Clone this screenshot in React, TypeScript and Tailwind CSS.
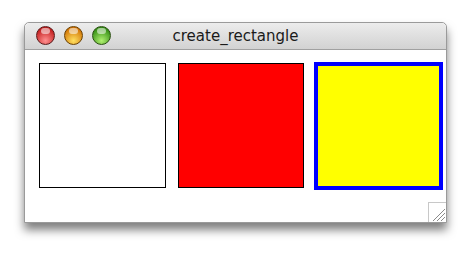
import React from 'react';

// 信号ボタン (閉じる・最小化・拡大)
const Light: React.FC<{ from: string; to: string; edge: string }> = ({ from, to, edge }) => (
  <div
    className="w-[19px] h-[19px] rounded-full border relative"
    style={{ background: `radial-gradient(circle at 50% 80%, ${to} 0%, ${from} 80%)`, borderColor: edge }}
  >
    <div className="absolute left-[4px] top-[1px] w-[9px] h-[6px] rounded-full bg-white/55" />
  </div>
);

const App: React.FC = () => {
  return (
    <div className="w-[474px] h-[255px] bg-white pt-[22px] pl-[24px]">
      <div className="w-[423px] h-[201px] flex flex-col bg-white border border-[#9a9a9a] rounded-t-[5px] shadow-[0_7px_10px_rgba(0,0,0,0.5)]">
        {/* タイトルバー */}
        <div className="h-[27px] flex items-center relative rounded-t-[5px] bg-gradient-to-b from-[#ececec] to-[#d2d2d2] border-b border-[#a0a0a0]">
          <div className="flex items-center gap-[9px] pl-[11px] -mt-[1px]">
            <Light from="#c01818" to="#ff9090" edge="#5a1a1a" />
            <Light from="#d07000" to="#ffe060" edge="#6a4000" />
            <Light from="#2f8a10" to="#b0f070" edge="#2a5010" />
          </div>
          <div
            className="absolute inset-0 flex items-center justify-center text-[15px] text-[#1a1a1a] pt-[1px]"
            style={{ fontFamily: '"DejaVu Sans", "Liberation Sans", sans-serif' }}
          >
            create_rectangle
          </div>
        </div>
        {/* 本体 */}
        <div className="flex-1 relative flex items-start pt-[12px] pl-[14px]">
          <div className="w-[127px] h-[125px] mt-[1px] bg-white border border-black" />
          <div className="w-[126px] h-[125px] mt-[1px] ml-[12px] bg-[#ff0000] border border-black" />
          <div className="w-[129px] h-[128px] ml-[10px] bg-[#ffff00] border-[4px] border-[#0000ff]" />
          <div className="absolute right-0 bottom-0 w-[18px] h-[20px] border-l border-t border-[#c8c8c8]">
            <svg width="18" height="20" viewBox="0 0 18 20" className="absolute -left-px -top-px">
              <path d="M5 19 L17 7 M9 19 L17 11 M13 19 L17 15" stroke="#8a8a8a" strokeWidth="1" fill="none" />
            </svg>
          </div>
        </div>
      </div>
    </div>
  );
};

export default App;
